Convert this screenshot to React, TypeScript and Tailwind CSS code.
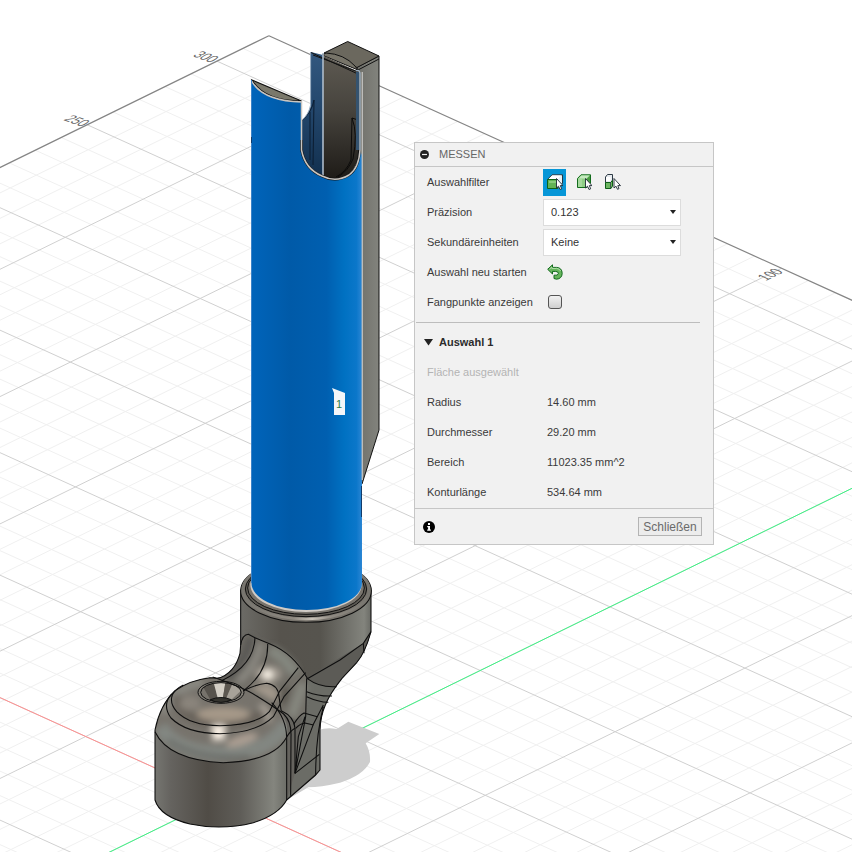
import { useState } from 'react';

type Point = [number, number];

// Rasterebene: Ursprung und die beiden Hauptrichtungen (je 50 mm)
const ORIGIN: Point = [65.3, 237.3];
const AXIS_A: Point = [129.8, -63.6];
const AXIS_B: Point = [134.9, 61.2];
const MAX_I = 2.4;
const MIN_J = -0.8;

const project = (i: number, j: number): Point => [
  ORIGIN[0] + i * AXIS_A[0] + j * AXIS_B[0],
  ORIGIN[1] + i * AXIS_A[1] + j * AXIS_B[1]
];

const segment = (from: Point, to: Point) => `M${from[0]} ${from[1]}L${to[0]} ${to[1]}`;

const lineA = (j: number) => segment(project(-12, j), project(MAX_I, j));
const lineB = (i: number) => segment(project(i, MIN_J), project(i, 14));

const steps = (from: number, to: number) =>
  Array.from({ length: to - from + 1 }, (_, n) => from + n);

const minorGrid = [
  ...steps(-3, 60).filter((n) => n % 5 !== 0).map((n) => lineA(n / 5)),
  ...steps(-50, 11).filter((n) => n % 5 !== 0).map((n) => lineB(n / 5))
].join('');

const majorGrid = [
  ...steps(0, 12).map((n) => lineA(n)),
  ...steps(-10, 2).map((n) => lineB(n))
].join('');

const measurements = [
  { label: 'Radius', value: '14.60 mm' },
  { label: 'Durchmesser', value: '29.20 mm' },
  { label: 'Bereich', value: '11023.35 mm^2' },
  { label: 'Konturlänge', value: '534.64 mm' }
];

function Grid() {
  return (
    <g fill="none">
      <path d={minorGrid} stroke="#f0f0f0" />
      <path d={majorGrid} stroke="#d0d0d0" />
      <path d={lineB(-4)} stroke="#ff8f8f" />
      <path d={lineA(5)} stroke="#3df584" />
      <path d={lineA(MIN_J) + lineB(MAX_I)} stroke="#858585" strokeWidth="1.2" />
      <g fill="#666" fontSize="12" fontFamily="'Liberation Sans', Arial, sans-serif">
        <text transform="translate(192 56) rotate(20) skewX(-40)">300</text>
        <text transform="translate(63 120) rotate(20) skewX(-40)">250</text>
        <text transform="translate(766 281) rotate(-26) skewX(40)">100</text>
      </g>
    </g>
  );
}

function Foot() {
  const body =
    'M302 60V225L300 250Q292 280 276 298Q255 322 230 325L210 323Q150 330 105 362Q60 405 45 480V690Q60 740 150 762Q245 782 340 758Q415 735 440 690L527 615L540 600V480Q541 440 556 405Q570 370 606 325L650 278Q675 250 693 185V60Z';

  return (
    <g transform="translate(140 570) scale(0.33333)">
      <path
        d="M535 480Q560 472 590 477L625 455L718 492L677 520Q692 545 690 575Q672 615 600 638Q540 652 505 652L440 690Z"
        fill="#cdcdcd"
      />
      <clipPath id="footClip">
        <path d={body} />
      </clipPath>
      <path d={body} fill="#65635e" />

      {/* Hals */}
      <g clipPath="url(#footClip)">
        <path d="M302 60V225Q310 193 325 193L390 222Q460 250 500 325L520 480L465 610L460 680L550 650V400L700 220V60Z" fill="url(#collar)" />
        <path d="M500 325L670 220L693 185L690 260L606 325L588 350Q540 353 500 325Z" fill="#5c5b56" />
        <path d="M500 325Q540 353 588 350L550 410L538 600L440 690L465 610Z" fill="#6b6c66" />
        <path d="M325 193Q303 195 302 225Q300 290 245 332L420 425L470 450L500 430V325Q470 250 390 222Z" fill="#716e67" />
        <g filter="url(#soft)">
          <path d="M330 200Q325 270 260 325" stroke="#5a5954" strokeWidth="30" fill="none" />
          <path d="M362 220Q350 285 295 335" stroke="#8b8982" strokeWidth="20" fill="none" />
          <path d="M390 240Q440 265 462 310" stroke="#84877f" strokeWidth="32" fill="none" />
          <ellipse cx="385" cy="312" rx="40" ry="26" fill="#a09a90" />
          <ellipse cx="383" cy="314" rx="15" ry="13" fill="#fff8ec" />
          <path d="M330 352Q400 328 415 370L408 398Z" fill="#a2988b" />
          <path d="M490 340L455 440" stroke="#85867e" strokeWidth="30" />
          <path d="M440 350L430 400" stroke="#57534c" strokeWidth="18" />
        </g>
      </g>

      {/* Kuppel */}
      <clipPath id="domeClip">
        <path d="M45 485Q60 400 105 362Q150 330 220 321Q320 355 380 395L425 428Q445 460 442 500Q410 575 250 578Q85 570 45 485Z" />
      </clipPath>
      <g clipPath="url(#domeClip)">
        <rect x="40" y="310" width="410" height="280" fill="#77736c" />
        <g filter="url(#soft)">
          <path d="M60 470Q110 550 250 550Q390 550 440 460" stroke="#828681" strokeWidth="44" fill="none" />
          <path d="M70 430Q90 355 190 335" stroke="#8b8a83" strokeWidth="24" fill="none" />
          <path d="M110 375Q120 455 235 457Q350 460 400 410" stroke="#69635b" strokeWidth="32" fill="none" />
          <ellipse cx="250" cy="432" rx="80" ry="22" fill="#a59888" />
          <ellipse cx="150" cy="400" rx="32" ry="22" fill="#8a847b" />
          <path d="M235 465L236 510" stroke="#fbf2e6" strokeWidth="38" />
          <ellipse cx="306" cy="510" rx="50" ry="15" fill="#ab9e92" transform="rotate(-18 306 510)" />
          <path d="M360 405Q390 425 385 455" stroke="#a49e94" strokeWidth="20" fill="none" />
          <path d="M85 510Q170 570 330 560" stroke="#5b5d5a" strokeWidth="9" fill="none" />
        </g>
      </g>
      <path
        d="M45 485Q85 570 250 578Q410 575 441 500V690Q415 735 340 758Q245 782 150 762Q60 740 45 690Z"
        fill="url(#base)"
      />

      {/* Senkbohrung */}
      <ellipse cx="243" cy="367" rx="69" ry="33" fill="#827e76" stroke="#111" strokeWidth="3" />
      <ellipse cx="243" cy="367" rx="61" ry="29" fill="#77736c" />
      <path d="M190 352Q205 342 222 340L235 390L211 389Z" fill="#57534d" />
      <path d="M222 341Q238 337 256 339L248 388H234Z" fill="#d3cec5" />
      <path d="M256 339L276 344L258 388H248Z" fill="#5d5851" />
      <path d="M276 344Q296 351 302 363L274 389L258 386Z" fill="#a7a299" />
      <ellipse cx="243" cy="367" rx="61" ry="29" fill="none" stroke="#111" strokeWidth="3" />
      <path d="M211 389Q243 376 274 389Q260 397 243 397Q224 397 211 389Z" fill="#35342f" stroke="#111" strokeWidth="3" />

      {/* Körperkanten */}
      <g fill="none" stroke="#0e0e0e" strokeWidth="3.2" strokeLinejoin="round">
        <path d={body} />
        <path d="M45 485Q85 570 250 578Q400 573 438 505Q450 483 465 475" />
        <path d="M130 345Q105 358 97 375Q88 400 110 425Q150 467 240 467Q350 465 388 425L418 365L475 293" />
        <path d="M95 372Q65 405 93 444Q140 491 240 491Q350 489 400 440L432 380L497 308" />
        <path d="M302 225Q308 193 325 193L345 203L390 222Q460 250 502 325" />
        <path d="M345 203Q342 285 245 332" />
        <path d="M383 222Q385 305 312 361" />
        <path d="M310 362Q350 342 380 340Q415 345 417 380L424 425" />
        <path d="M218 321Q310 352 350 378Q400 409 431 432Q455 455 453 500L452 677" />
        <path d="M395 398Q440 445 440 505V690M424 422Q463 440 465 475V610" />
        <path d="M500 325L497 440L465 610M495 440L475 500L465 610" />
        <path d="M502 326L600 270L670 220L693 185M670 220L672 250" />
        <path d="M502 326Q540 354 590 350M500 365Q540 380 576 378M500 380Q535 396 565 397" />
        <path d="M550 405L520 463L465 610M550 410Q527 500 527 615" />
        <path d="M461 463Q478 435 492 429L532 440M467 475Q480 461 495 459L520 465M465 610L538 553" />
      </g>

      {/* Kragen */}
      <ellipse cx="498" cy="63" rx="196" ry="94" fill="#77736c" stroke="#0e0e0e" strokeWidth="3.2" />
      <ellipse cx="498" cy="59" rx="190" ry="88" fill="none" stroke="url(#rim)" strokeWidth="7" />
      <ellipse cx="498" cy="57" rx="182" ry="83" fill="#5c5953" stroke="#111" strokeWidth="3" />
      <ellipse cx="498" cy="54" rx="175" ry="79" fill="#78746d" stroke="#111" strokeWidth="3" />
      <ellipse cx="498" cy="44" rx="167" ry="82" fill="#d0cbc6" />
    </g>
  );
}

function Tube() {
  return (
    <g>
      {/* Rechteckprofil */}
      <path d="M357 67L379 56V430L362 484L357 480Z" fill="url(#profile)" stroke="#111" />
      <path d="M347.7 41.5L379 56L357 67.5L324 53Z" fill="#6b685e" stroke="#111" strokeLinejoin="round" />
      <path d="M357 70.5L379 59" stroke="#111" fill="none" />
      <path d="M326 53Q344 54 355 66L358 70L322 55Z" fill="#777469" stroke="#111" />

      {/* Innenseite */}
      <path d="M322 55L359 72V145Q359 178 334 179Q325 178 322 174Z" fill="url(#inside)" />
      <path d="M311 52L323 55V176Q302 165 301.5 148V121Q308 116 311 105Z" fill="url(#insideBlue)" />
      <path d="M311 52.5L358 74M313 55L357 71.5" stroke="#111" fill="none" />
      <path d="M301.5 121Q312 112 314 100L313 165M310 112V160" stroke="#0b1c30" fill="none" />
      <path d="M323 53V176" stroke="#aebccb" strokeWidth="1.6" />
      <path d="M310.6 52V105Q309 114 302 120" stroke="#91a6bb" fill="none" />
      <path d="M352 118L351 160Q346 172 336 177M352 118Q358 133 353 159Q348 171 338 177M352 118L358 120" stroke="#0c0b0a" fill="none" />
      <path d="M357.5 72V150" stroke="#35536f" strokeWidth="3" />

      {/* Ausgewählte Mantelfläche */}
      <path
        d="M251.5 81Q264 101 301.5 102V150Q305 169 322 176Q336 183 349 175Q358 168 359.5 150L362 155V583A55 27 0 0 1 251.5 583Z"
        fill="url(#selection)"
      />
      <path d="M252 80L301.5 101Q264 101 252 80Z" fill="#7a786b" stroke="#111" strokeWidth="1.2" />
      <path
        d="M301.5 140V150Q305 169 322 176Q336 183 349 175Q359 168 359.5 150"
        fill="none"
        stroke="#111"
        strokeWidth="2.6"
      />
      <path
        d="M251.5 81Q263 101 301.5 102V150Q305 169 322 176Q336 183 349 175Q359 168 360 150"
        fill="none"
        stroke="#c9c5c0"
        strokeWidth="1.5"
      />
      <path d="M360 150V73Q359 69 356 71" stroke="#9fb3c7" strokeWidth="1.2" fill="none" />
      <path d="M362.3 72V480" stroke="#bdbcb9" strokeWidth="1.4" />
      <path d="M251.5 80V583" stroke="#3b83c8" />
      <path d="M251.5 137V143M361.5 486V517" stroke="#123c6b" />
    </g>
  );
}

function ModelView() {
  return (
    <svg
      className="absolute inset-0 h-full w-full"
      viewBox="0 0 852 852"
      preserveAspectRatio="xMinYMin slice"
      role="img"
      aria-label="3D-Modell"
    >
      <defs>
        <linearGradient id="selection">
          <stop offset="0" stopColor="#0064ba" />
          <stop offset="0.35" stopColor="#005aa8" />
          <stop offset="0.68" stopColor="#005fb0" />
          <stop offset="0.84" stopColor="#0071c2" />
          <stop offset="0.95" stopColor="#0b77ca" />
          <stop offset="1" stopColor="#2c86d4" />
        </linearGradient>
        <linearGradient id="profile">
          <stop offset="0" stopColor="#70706a" />
          <stop offset="1" stopColor="#82837d" />
        </linearGradient>
        <linearGradient id="inside" x1="0" y1="0" x2="0" y2="1">
          <stop offset="0" stopColor="#5e5a52" />
          <stop offset="0.45" stopColor="#46433d" />
          <stop offset="1" stopColor="#1e1b17" />
        </linearGradient>
        <linearGradient id="insideBlue" x1="0" y1="0" x2="0" y2="1">
          <stop offset="0" stopColor="#33587f" />
          <stop offset="0.4" stopColor="#25496f" />
          <stop offset="1" stopColor="#12304f" />
        </linearGradient>
        <linearGradient id="collar">
          <stop offset="0" stopColor="#6c6b66" />
          <stop offset="0.3" stopColor="#56534d" />
          <stop offset="0.6" stopColor="#56544e" />
          <stop offset="0.8" stopColor="#71716b" />
          <stop offset="0.93" stopColor="#83847d" />
          <stop offset="1" stopColor="#62635e" />
        </linearGradient>
        <linearGradient id="base">
          <stop offset="0" stopColor="#767671" />
          <stop offset="0.12" stopColor="#65635f" />
          <stop offset="0.4" stopColor="#504c46" />
          <stop offset="0.65" stopColor="#5f5d58" />
          <stop offset="0.9" stopColor="#84857e" />
          <stop offset="1" stopColor="#6c6d67" />
        </linearGradient>
        <linearGradient id="rim">
          <stop offset="0" stopColor="#77756f" />
          <stop offset="0.4" stopColor="#8f8a82" />
          <stop offset="0.55" stopColor="#c8c2b8" />
          <stop offset="0.7" stopColor="#8f8a82" />
          <stop offset="1" stopColor="#77756f" />
        </linearGradient>
        <filter id="soft" x="-30%" y="-30%" width="160%" height="160%">
          <feGaussianBlur stdDeviation="9" />
        </filter>
      </defs>

      <Grid />
      <Foot />
      <Tube />

      {/* Auswahlmarke */}
      <path d="M332 388L345 393V415H334V393Z" fill="#f4f6f8" />
      <text x="336" y="408" fontSize="11" fontFamily="'Liberation Sans', Arial, sans-serif" fill="#2f7d46">
        1
      </text>
    </svg>
  );
}

const cursorPath = 'M9.5 4.5V14L11.5 12.2L13 15.5L14.7 14.8L13.3 11.6H16Z';

function BodyFilterIcon() {
  return (
    <svg className="h-4 w-4" viewBox="0 0 16 16" aria-hidden="true">
      <path d="M.5 5.5L5 .8H15.5V9L11 14.5Z" fill="#e8f1f5" stroke="#223642" />
      <path d="M1.5 5L5.3 1.5H14L11 5Z" fill="#fff" />
      <path d="M.5 5.5H10.5V14.5H.5Z" fill="#63b355" stroke="#0d6316" />
      <path d="M2 7H9V9H2Z" fill="#8acb7c" />
      <path d={cursorPath} fill="#fff" stroke="#1d2833" strokeWidth="0.9" />
    </svg>
  );
}

function FaceFilterIcon() {
  return (
    <svg className="h-4 w-4" viewBox="0 0 16 16" aria-hidden="true">
      <path d="M1.5 4.5L5 .8H14.5V9L11 13.5H1.5Z" fill="#8fce86" stroke="#126b1c" />
      <path d="M2.5 4.5L5.5 1.5H13.5L10.5 4.5Z" fill="#c5eabf" />
      <path d="M10.5 5L14 1.5V8L10.5 12Z" fill="#4a9d43" />
      <path d="M2 5H6V13H2Z" fill="#a5d99d" />
      <path d={cursorPath} fill="#fff" stroke="#1d2833" strokeWidth="0.9" />
    </svg>
  );
}

function ComponentFilterIcon() {
  return (
    <svg className="h-4 w-4" viewBox="0 0 16 16" aria-hidden="true">
      <path d="M.5 3L2.5 .5H7.5V6L6 8.5H.5Z" fill="#e7ebef" stroke="#2c3a45" />
      <path d="M1 3H5.5V7H1Z" fill="#fff" />
      <path d="M.5 8.5H5.5L7.5 6.5V12L6 14.5H.5Z" fill="#6db661" stroke="#0d5c17" />
      <path d="M5.5 8V14" stroke="#31434a" strokeWidth="0.8" />
      <path d="M9 4.5V14L11 12.2L12.5 15.3L14 14.6L12.8 11.6H15.5Z" fill="#fff" stroke="#1d2833" strokeWidth="0.9" />
    </svg>
  );
}

function RestartIcon() {
  return (
    <svg className="h-4 w-4" viewBox="0 0 16 16" aria-hidden="true">
      <path
        d="M.7 5.3L5.5 .8V3.4H9.5Q15 3.6 15.2 9.5Q14.8 14.8 9.5 15.2L7 14.5V11.2Q11.2 12 11.4 9.4Q11.2 7.4 8.5 7.4H5.5V10Z"
        fill="#66b55c"
        stroke="#10691b"
        strokeLinejoin="round"
      />
      <path d="M2.5 5.2L4.8 3V4.4H9.5Q12.5 4.5 13.6 7" fill="none" stroke="#b3e0aa" />
    </svg>
  );
}

const filters = [
  { id: 'body', title: 'Fläche/Kante/Scheitelpunkt auswählen', Icon: BodyFilterIcon },
  { id: 'face', title: 'Körper auswählen', Icon: FaceFilterIcon },
  { id: 'component', title: 'Komponente auswählen', Icon: ComponentFilterIcon }
];

interface DropdownProps {
  id: string;
  value: string;
  options: string[];
  onChange: (value: string) => void;
}

function Dropdown({ id, value, options, onChange }: DropdownProps) {
  return (
    <div className="relative w-[138px]">
      <select
        id={id}
        value={value}
        onChange={(e) => onChange(e.target.value)}
        className="block h-[27px] w-full appearance-none border border-[#dcdcdc] bg-white pl-[7px] pr-5 text-[11px] text-[#333] outline-none"
      >
        {options.map((option) => (
          <option key={option}>{option}</option>
        ))}
      </select>
      <svg className="pointer-events-none absolute right-[5px] top-[11px] h-1 w-[6px]" viewBox="0 0 6 4" aria-hidden="true">
        <path d="M0 0H6L3 4Z" fill="#222" />
      </svg>
    </div>
  );
}

function MeasurePanel() {
  const [filter, setFilter] = useState('body');
  const [precision, setPrecision] = useState('0.123');
  const [units, setUnits] = useState('Keine');
  const [snapPoints, setSnapPoints] = useState(false);
  const [expanded, setExpanded] = useState(true);

  return (
    <section className="w-[300px] border border-[#c6c6c6] bg-[#f1f1f1] text-[11px] text-[#3a3a3a]">
      <header className="flex h-6 items-center gap-[10px] border-b border-[#c6c6c6] pl-[5px]">
        <svg className="h-[9px] w-[9px]" viewBox="0 0 9 9" aria-hidden="true">
          <circle cx="4.5" cy="4.5" r="4.5" fill="#222" />
          <path d="M2 4.5H7" stroke="#f1f1f1" strokeWidth="1.2" />
        </svg>
        <h1 className="text-[#666]">MESSEN</h1>
      </header>

      <div className="pl-3">
        <div className="flex h-[30px] items-center">
          <span className="w-[116px]">Auswahlfilter</span>
          <div className="flex gap-[6px]">
            {filters.map(({ id, title, Icon }) => (
              <button
                key={id}
                type="button"
                title={title}
                aria-pressed={filter === id}
                onClick={() => setFilter(id)}
                className={`flex h-[27px] w-[23px] items-center justify-center ${filter === id ? 'bg-[#0696d7]' : ''}`}
              >
                <Icon />
              </button>
            ))}
          </div>
        </div>

        <div className="flex h-[30px] items-center">
          <label htmlFor="precision" className="w-[116px]">Präzision</label>
          <Dropdown
            id="precision"
            value={precision}
            options={['0', '0.1', '0.12', '0.123', '0.1234']}
            onChange={setPrecision}
          />
        </div>

        <div className="flex h-[30px] items-center">
          <label htmlFor="units" className="w-[116px]">Sekundäreinheiten</label>
          <Dropdown id="units" value={units} options={['Keine', 'cm', 'm', 'in']} onChange={setUnits} />
        </div>

        <div className="flex h-[30px] items-center">
          <span className="w-[120px]">Auswahl neu starten</span>
          <button type="button" aria-label="Auswahl neu starten">
            <RestartIcon />
          </button>
        </div>

        <div className="flex h-[30px] items-center">
          <label htmlFor="snap" className="w-[121px]">Fangpunkte anzeigen</label>
          <input
            id="snap"
            type="checkbox"
            checked={snapPoints}
            onChange={(e) => setSnapPoints(e.target.checked)}
            className="h-[14px] w-[14px] appearance-none rounded-[3px] border border-[#555] bg-linear-to-b from-[#f2f2f2] to-[#cfcfcf] checked:from-[#0696d7] checked:to-[#0696d7]"
          />
        </div>
      </div>

      <hr className="mb-1 ml-px mr-[13px] mt-[5px] border-[#bdbdbd]" />

      <div className="pb-px">
        <button
          type="button"
          aria-expanded={expanded}
          onClick={() => setExpanded(!expanded)}
          className="flex h-[30px] items-center gap-[6px] pl-[9px] font-bold text-[#2b2b2b]"
        >
          <svg className="h-[7px] w-[9px]" viewBox="0 0 9 7" aria-hidden="true">
            <path d="M0 0H9L4.5 6.5Z" fill="#222" />
          </svg>
          Auswahl 1
        </button>
        {expanded && (
          <div className="pl-3">
            <p className="h-[30px] leading-[30px] text-[#b4b4b4]">Fläche ausgewählt</p>
            <dl>
              {measurements.map(({ label, value }) => (
                <div key={label} className="flex h-[30px] items-center">
                  <dt className="w-[120px]">{label}</dt>
                  <dd>{value}</dd>
                </div>
              ))}
            </dl>
          </div>
        )}
      </div>

      <footer className="flex h-9 items-center justify-between border-t border-[#c6c6c6] pl-2 pr-[11px]">
        <svg className="h-3 w-3" viewBox="0 0 12 12" role="img" aria-label="Info">
          <circle cx="6" cy="6" r="6" fill="#000" />
          <path d="M5 2H7V4H5ZM4.2 5H7V8.6H7.9V9.8H4.2V8.6H5.1V6.2H4.2Z" fill="#fff" />
        </svg>
        <button
          type="button"
          className="h-[19px] w-16 border border-[#b4b4b4] bg-[#ececec] text-xs leading-none text-[#6a6a6a]"
        >
          Schließen
        </button>
      </footer>
    </section>
  );
}

export default function App() {
  return (
    <main className="relative flex min-h-screen items-start justify-end overflow-hidden bg-white pr-[138px] pt-[142px] font-['Liberation_Sans',Arial,sans-serif]">
      <ModelView />
      <div className="relative">
        <MeasurePanel />
      </div>
    </main>
  );
}
